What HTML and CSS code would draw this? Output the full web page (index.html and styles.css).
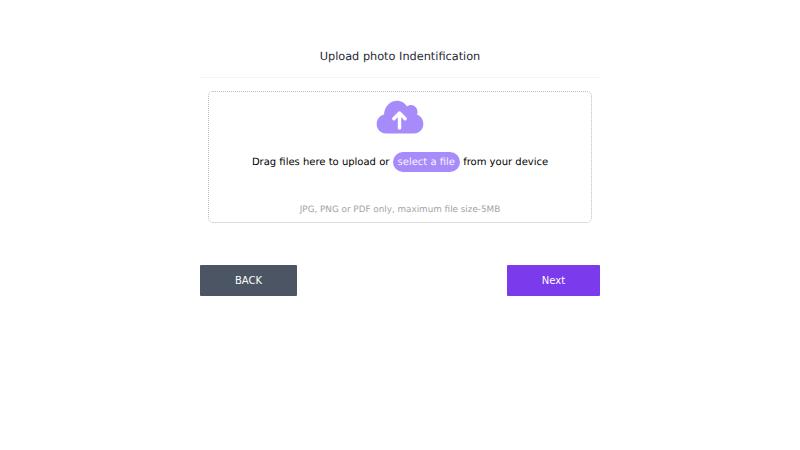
FILE: index.html
```html
<!DOCTYPE html>
<html lang="en">
<head>
<meta charset="utf-8">
<title>Upload photo Indentification</title>
<link rel="stylesheet" href="styles.css">
</head>
<body>
<main class="panel">
  <h1 class="title">Upload photo Indentification</h1>
  <div class="dropzone">
    <svg class="cloud" viewBox="0 0 48 36" width="48" height="36" aria-hidden="true">
      <path fill="#a78bfa" d="M10 33.500C4.500 33.500 0.700 29.200 0.700 24C0.700 19.500 3.700 15.500 8 14.500C8.500 6.500 14 0.700 21 0.700C25.500 0.700 29 3 31 6.500C32.300 5.500 33.500 5 35 5C38.500 5 41.500 8 41.500 12C41.500 13 41.400 14 41 14.800C44.800 16 47.300 19.500 47.300 24C47.300 29.200 43.300 33.500 38 33.500Z"/>
      <path fill="none" stroke="#fff" stroke-width="3.400" stroke-linecap="round" stroke-linejoin="round" d="M23.500 28V13M17.800 18.700L23.500 13L29.200 18.700"/>
    </svg>
    <p class="prompt">Drag files here to upload or <span class="pick">select a file</span> from your device</p>
    <p class="hint">JPG, PNG or PDF only, maximum file size-5MB</p>
  </div>
  <div class="actions">
    <button class="btn back" type="button">BACK</button>
    <button class="btn next" type="button">Next</button>
  </div>
</main>
</body>
</html>
```
FILE: styles.css
```css
* { box-sizing: border-box; }
html, body { margin: 0; padding: 0; background: #fff; }
body { font-family: "DejaVu Sans", sans-serif; text-rendering: geometricPrecision; }
.panel { width: 400px; margin: 0 auto; padding-top: 49px; }
.title {
  margin: 0;
  height: 29px;
  border-bottom: 1px solid #f3f4f6;
  font-size: 11.300px;
  font-weight: 400;
  line-height: 16px;
  text-align: center;
  color: #1f2937;
}
.dropzone {
  margin: 13px 8px 0;
  height: 132px;
  padding-top: 8px;
  border: 1px dotted #bdbdbd;
  border-radius: 5px;
  display: flex;
  flex-direction: column;
  align-items: center;
}
.cloud { display: block; }
.prompt {
  margin: 16px 0 0;
  font-size: 10px;
  line-height: 20px;
  color: #000;
}
.pick {
  display: inline-block;
  padding: 2px 5px 0;
  line-height: 18px;
  border-radius: 10px;
  background: #a78bfa;
  color: #f5f3ff;
}
.hint {
  margin: 29.500px 0 0;
  font-size: 8.800px;
  line-height: 14px;
  color: #a3a3a3;
}
.actions {
  margin-top: 42px;
  display: flex;
  justify-content: space-between;
}
.btn {
  height: 31px;
  border: 0;
  border-radius: 1px;
  color: #fff;
  font-family: inherit;
  font-size: 10px;
  padding: 0;
}
.back { width: 97px; background: #4b5563; }
.next { width: 93px; background: #7c3aed; }
```
